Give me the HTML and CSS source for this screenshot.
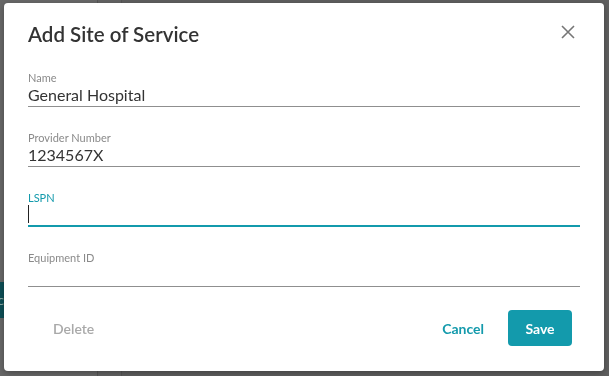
FILE: index.html
```html
<!DOCTYPE html>
<html>
<head>
<meta charset="utf-8">
<link rel="stylesheet" href="styles.css">
</head>
<body>
<div class="page">
  <div class="col col-a"><div class="peek-btn">c</div></div>
  <div class="col col-b"></div>
  <div class="col col-c"></div>
</div>
<div class="dialog">
  <div class="header">
    <h1 class="title">Add Site of Service</h1>
    <button class="close" aria-label="Close">
      <svg width="14" height="14" viewBox="0 0 14 14"><path d="M1 1L13 13M13 1L1 13" stroke="#767676" stroke-width="1.6" fill="none"/></svg>
    </button>
  </div>
  <div class="fields">
    <div class="field">
      <div class="label">Name</div>
      <div class="input">General Hospital</div>
    </div>
    <div class="field">
      <div class="label">Provider Number</div>
      <div class="input">1234567X</div>
    </div>
    <div class="field focused">
      <div class="label">LSPN</div>
      <div class="input"><span class="caret"></span></div>
    </div>
    <div class="field">
      <div class="label">Equipment ID</div>
      <div class="input"></div>
    </div>
  </div>
  <div class="footer">
    <button class="btn btn-delete">Delete</button>
    <div class="spacer"></div>
    <button class="btn btn-cancel">Cancel</button>
    <button class="btn btn-save">Save</button>
  </div>
</div>
</body>
</html>
```
FILE: styles.css
```css
* { box-sizing: border-box; }
html, body { margin: 0; padding: 0; height: 100%; }
body {
  font-family: Lato, "Open Sans", sans-serif;
  background: #5f5f5f;
  overflow: hidden;
}
.page {
  display: flex;
  height: 100%;
}
.col { height: 100%; }
.col-a {
  width: 98px;
  background: #686868;
  border-right: 1px solid #555;
  padding-top: 282px;
}
.col-b {
  width: 24px;
  background: #636363;
  border-right: 1px solid #555;
}
.col-c { flex: 1; background: #5f5f5f; }
.peek-btn {
  width: 60px;
  height: 36px;
  background: #0e4f56;
  color: #8aa;
  font-size: 14px;
  line-height: 36px;
  text-align: right;
  margin-left: -56px;
}
.dialog {
  position: fixed;
  left: 4px;
  top: 3px;
  width: 600px;
  height: 368px;
  background: #fff;
  border-radius: 4px;
  box-shadow: 0 2px 6px rgba(0,0,0,0.3);
  padding: 0 24px;
  display: flex;
  flex-direction: column;
}
.header {
  display: flex;
  align-items: center;
  justify-content: space-between;
  height: 60px;
  padding-top: 1px;
}
.title {
  margin: 0;
  font-size: 20.5px;
  font-weight: 600;
  color: #333;
  line-height: 24px;
}
.close {
  border: 0;
  background: none;
  padding: 0;
  width: 14px;
  height: 14px;
  margin-right: 5px;
  margin-top: -4px;
  display: flex;
}
.fields {
  display: flex;
  flex-direction: column;
  gap: 24px;
  margin-top: 8px;
}
.field { display: flex; flex-direction: column; }
.label {
  font-size: 11px;
  line-height: 14px;
  color: #8a8a8a;
}
.input {
  height: 22px;
  border-bottom: 1px solid #8f8f8f;
  font-size: 16px;
  line-height: 20px;
  color: #333;
  position: relative;
}
.focused .label { color: #139aac; }
.focused .input {
  border-bottom: 2px solid #139aac;
}
.caret {
  display: block;
  width: 1px;
  height: 18px;
  background: #222;
  margin-top: 0;
}
.footer {
  display: flex;
  align-items: center;
  margin-top: 23px;
  height: 36px;
  padding-right: 8px;
}
.spacer { flex: 1; }
.btn {
  border: 0;
  background: none;
  font-family: Lato, "Open Sans", sans-serif;
  font-size: 14px;
  font-weight: 700;
  height: 36px;
  border-radius: 4px;
  padding: 0;
}
.btn-delete { color: #a9a9a9; margin-left: 25px; font-weight: 600; }
.btn-cancel { color: #139aac; margin-right: 24px; }
.btn-save {
  background: #139aac;
  color: #fff;
  width: 64px;
}
```
